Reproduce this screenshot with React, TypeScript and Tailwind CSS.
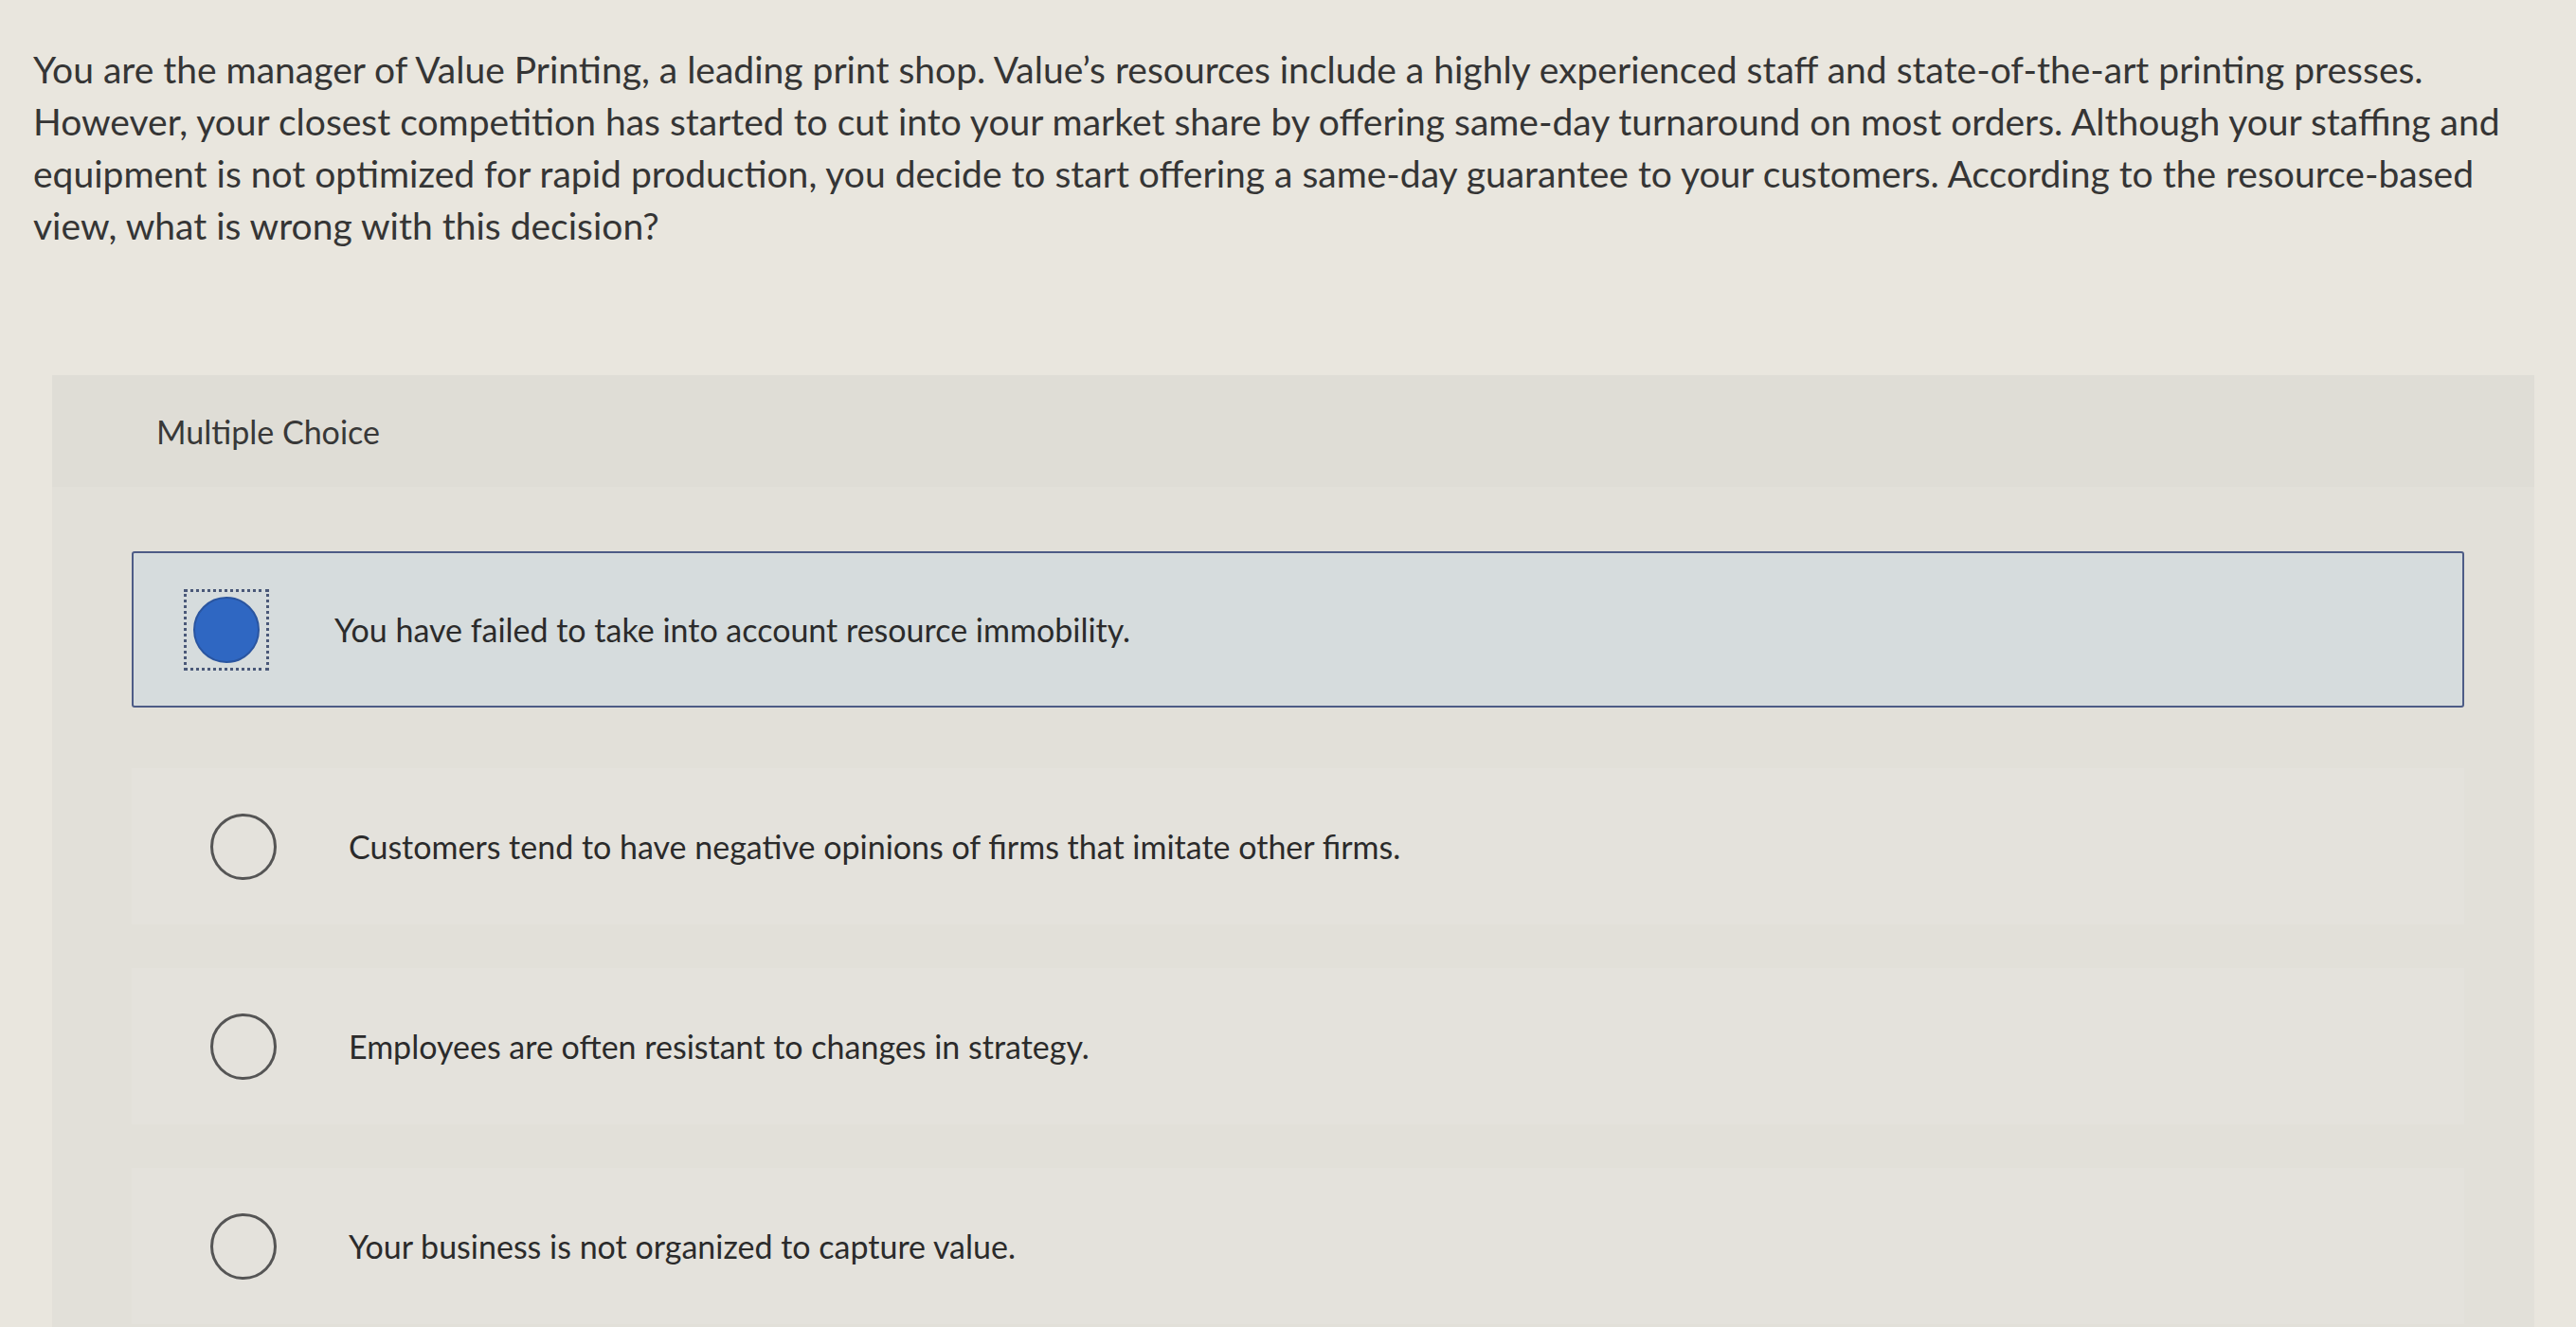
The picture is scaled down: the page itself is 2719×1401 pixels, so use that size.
import React from 'react';

const options = [
  'You have failed to take into account resource immobility.',
  'Customers tend to have negative opinions of firms that imitate other firms.',
  'Employees are often resistant to changes in strategy.',
  'Your business is not organized to capture value.',
];

export default function App() {
  const selected = 0;

  return (
    <div className="w-[2719px] h-[1401px] overflow-hidden bg-[#e9e6de] font-['Lato',sans-serif] text-[#2e2e2e]">
      {/* Question */}
      <p className="pl-[35px] pr-[40px] pt-[46px] text-[39px] leading-[55px] text-[#353535]">
        You are the manager of Value Printing, a leading print shop. Value’s resources include a highly experienced staff and state-of-the-art printing presses. However, your closest competition has started to cut into your market share by offering same-day turnaround on most orders. Although your staffing and equipment is not optimized for rapid production, you decide to start offering a same-day guarantee to your customers. According to the resource-based view, what is wrong with this decision?
      </p>

      {/* Answer panel */}
      <div className="mt-[130px] ml-[55px] w-[2620px] h-[1100px] bg-[#e2e0d9]">
        <div className="h-[118px] pl-[110px] flex items-center text-[34px] text-[#383838] bg-[#dfddd6]">
          Multiple Choice
        </div>

        <div className="pl-[84px] pr-[74px] pt-[68px] flex flex-col gap-[46px]">
          {options.map((opt, i) => {
            const isSel = i === selected;
            return (
              <div
                key={i}
                className={
                  isSel
                    ? 'h-[165px] mb-[18px] flex items-center rounded-[3px] border-2 border-[#4d5c86] bg-[#d6dcdd]'
                    : 'h-[165px] flex items-center bg-[#e4e2dc]'
                }
              >
                <div className={isSel ? 'w-[212px] pl-[53px] flex items-center' : 'w-[229px] pl-[53px] flex items-center'}>
                  {isSel ? (
                    <div className="w-[90px] h-[86px] border-[3px] border-dotted border-[#4a5878] flex items-center justify-center">
                      <div className="w-[70px] h-[70px] rounded-full bg-[#2f67c2] border-2 border-[#2a55a0]" />
                    </div>
                  ) : (
                    <div className="ml-[30px] w-[70px] h-[70px] rounded-full border-[3px] border-[#555]" />
                  )}
                </div>
                <span className="text-[34px] text-[#2b2b2b]">{opt}</span>
              </div>
            );
          })}
        </div>
      </div>
    </div>
  );
}
